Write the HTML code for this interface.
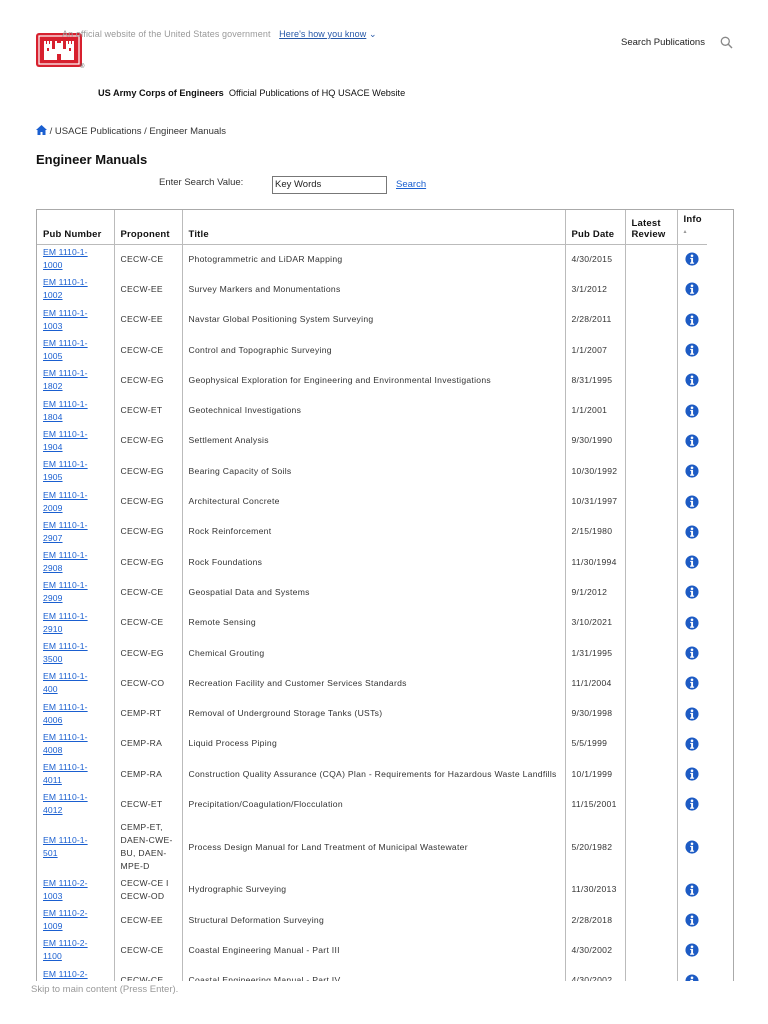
<!DOCTYPE html>
<html><head><meta charset="utf-8">
<style>
*{margin:0;padding:0;box-sizing:border-box}
body{width:768px;height:1024px;overflow:hidden;background:#fff;font-family:"Liberation Sans","DejaVu Sans",sans-serif;color:#222;position:relative}
.abs{position:absolute}
a{color:#1a5fd0;text-decoration:underline}
.gov{left:62px;top:29px;font-size:9px;color:#999;letter-spacing:.1px}
.gov a{color:#2557a7;margin-left:6px}
.title{left:98px;top:88px;font-size:9.2px;color:#111}
.crumb{left:36px;top:125px;font-size:9.5px;color:#333}
h1{position:absolute;left:36px;top:152px;font-size:13px;font-weight:bold;color:#111}
.wrap{position:absolute;left:36px;top:209px;width:698px;height:800px;border:1px solid #aaa;border-bottom:none;overflow:hidden}
table{border-collapse:collapse;width:670px;table-layout:fixed;font-size:8.6px;letter-spacing:.28px}
th{font-size:9.5px;font-weight:bold;text-align:left;vertical-align:bottom;padding:0 6px 4px 6px;border-left:1px solid #bbb;border-bottom:1px solid #bbb;height:34px;color:#111;letter-spacing:.2px}
th:first-child{border-left:none}
td{border-left:1px solid #bbb;padding:0 6px;vertical-align:middle;height:30.3px;line-height:13px;color:#333}
td:first-child{border-left:none;letter-spacing:.1px}
td:nth-child(3){white-space:nowrap;overflow:hidden}
.i{display:block;margin:0 auto}
</style></head><body>
<svg class="abs" style="left:36px;top:33px" width="46" height="34" viewBox="0 0 46 34">
<rect x="0" y="0" width="46" height="34" rx="3" fill="#d7202e"/>
<rect x="3" y="3" width="40" height="28" fill="none" stroke="#fff" stroke-width="1.2"/>
<g fill="#fff">
<rect x="8" y="11" width="8" height="16"/><rect x="30" y="11" width="8" height="16"/><rect x="16" y="16" width="14" height="11"/>
<rect x="8" y="8" width="2" height="3"/><rect x="11" y="8" width="2" height="3"/><rect x="14" y="8" width="2" height="3"/>
<rect x="30" y="8" width="2" height="3"/><rect x="33" y="8" width="2" height="3"/><rect x="36" y="8" width="2" height="3"/>
<rect x="19" y="10" width="8" height="6"/><rect x="19" y="8" width="2" height="2"/><rect x="25" y="8" width="2" height="2"/>
</g>
<g fill="#d7202e"><rect x="11" y="15" width="2" height="3"/><rect x="33" y="15" width="2" height="3"/><rect x="21" y="21" width="4" height="6"/></g>
</svg>
<div class="abs" style="left:80px;top:64px;font-size:6px;color:#555">®</div>
<div class="abs gov">An official website of the United States government <a>Here's how you know</a> <span style="color:#2557a7">⌄</span></div>
<div class="abs" style="left:621px;top:37px;font-size:9.5px;color:#222">Search Publications</div>
<svg class="abs" style="left:720px;top:36px" width="13" height="13" viewBox="0 0 13 13"><circle cx="5.3" cy="5.3" r="4" fill="none" stroke="#888" stroke-width="1.3"/><path d="M8.3 8.3L12 12" stroke="#888" stroke-width="1.4"/></svg>
<div class="abs title"><b>US Army Corps of Engineers</b>&nbsp; Official Publications of HQ USACE Website</div>
<div class="abs crumb"><svg width="11" height="10" viewBox="0 0 11 10" style="vertical-align:-1px"><path d="M5.5 0L0 5h1.5v5h3V7h2v3h3V5H11z" fill="#1a5fd0"/></svg> / USACE Publications / Engineer Manuals</div>
<h1>Engineer Manuals</h1>
<div class="abs" style="left:159px;top:177px;font-size:9.5px;color:#333">Enter Search Value:</div>
<div class="abs" style="left:272px;top:176px;width:115px;height:18px;border:1px solid #777;font-size:9.5px;padding:2px 2px;color:#222">Key Words</div>
<div class="abs" style="left:396px;top:179px;font-size:9.5px"><a>Search</a></div>
<div class="wrap"><table>
<colgroup><col style="width:77px"><col style="width:68px"><col style="width:383px"><col style="width:60px"><col style="width:52px"><col style="width:30px"></colgroup>
<tr><th>Pub Number</th><th>Proponent</th><th>Title</th><th>Pub Date</th><th>Latest Review</th><th style="vertical-align:top;padding-top:4px">Info<br><span style="font-size:6px;color:#999;font-weight:normal">▴</span></th></tr>
<tbody id="b">
<tr><td><a>EM 1110-1-<br>1000</a></td><td>CECW-CE</td><td>Photogrammetric and LiDAR Mapping</td><td>4/30/2015</td><td></td><td>I</td></tr>
<tr><td><a>EM 1110-1-<br>1002</a></td><td>CECW-EE</td><td>Survey Markers and Monumentations</td><td>3/1/2012</td><td></td><td>I</td></tr>
<tr><td><a>EM 1110-1-<br>1003</a></td><td>CECW-EE</td><td>Navstar Global Positioning System Surveying</td><td>2/28/2011</td><td></td><td>I</td></tr>
<tr><td><a>EM 1110-1-<br>1005</a></td><td>CECW-CE</td><td>Control and Topographic Surveying</td><td>1/1/2007</td><td></td><td>I</td></tr>
<tr><td><a>EM 1110-1-<br>1802</a></td><td>CECW-EG</td><td>Geophysical Exploration for Engineering and Environmental Investigations</td><td>8/31/1995</td><td></td><td>I</td></tr>
<tr><td><a>EM 1110-1-<br>1804</a></td><td>CECW-ET</td><td>Geotechnical Investigations</td><td>1/1/2001</td><td></td><td>I</td></tr>
<tr><td><a>EM 1110-1-<br>1904</a></td><td>CECW-EG</td><td>Settlement Analysis</td><td>9/30/1990</td><td></td><td>I</td></tr>
<tr><td><a>EM 1110-1-<br>1905</a></td><td>CECW-EG</td><td>Bearing Capacity of Soils</td><td>10/30/1992</td><td></td><td>I</td></tr>
<tr><td><a>EM 1110-1-<br>2009</a></td><td>CECW-EG</td><td>Architectural Concrete</td><td>10/31/1997</td><td></td><td>I</td></tr>
<tr><td><a>EM 1110-1-<br>2907</a></td><td>CECW-EG</td><td>Rock Reinforcement</td><td>2/15/1980</td><td></td><td>I</td></tr>
<tr><td><a>EM 1110-1-<br>2908</a></td><td>CECW-EG</td><td>Rock Foundations</td><td>11/30/1994</td><td></td><td>I</td></tr>
<tr><td><a>EM 1110-1-<br>2909</a></td><td>CECW-CE</td><td>Geospatial Data and Systems</td><td>9/1/2012</td><td></td><td>I</td></tr>
<tr><td><a>EM 1110-1-<br>2910</a></td><td>CECW-CE</td><td>Remote Sensing</td><td>3/10/2021</td><td></td><td>I</td></tr>
<tr><td><a>EM 1110-1-<br>3500</a></td><td>CECW-EG</td><td>Chemical Grouting</td><td>1/31/1995</td><td></td><td>I</td></tr>
<tr><td><a>EM 1110-1-<br>400</a></td><td>CECW-CO</td><td>Recreation Facility and Customer Services Standards</td><td>11/1/2004</td><td></td><td>I</td></tr>
<tr><td><a>EM 1110-1-<br>4006</a></td><td>CEMP-RT</td><td>Removal of Underground Storage Tanks (USTs)</td><td>9/30/1998</td><td></td><td>I</td></tr>
<tr><td><a>EM 1110-1-<br>4008</a></td><td>CEMP-RA</td><td>Liquid Process Piping</td><td>5/5/1999</td><td></td><td>I</td></tr>
<tr><td><a>EM 1110-1-<br>4011</a></td><td>CEMP-RA</td><td>Construction Quality Assurance (CQA) Plan - Requirements for Hazardous Waste Landfills</td><td>10/1/1999</td><td></td><td>I</td></tr>
<tr><td><a>EM 1110-1-<br>4012</a></td><td>CECW-ET</td><td>Precipitation/Coagulation/Flocculation</td><td>11/15/2001</td><td></td><td>I</td></tr>
<tr><td style="height:55px"><a>EM 1110-1-<br>501</a></td><td>CEMP-ET,<br>DAEN-CWE-<br>BU, DAEN-<br>MPE-D</td><td>Process Design Manual for Land Treatment of Municipal Wastewater</td><td>5/20/1982</td><td></td><td>I</td></tr>
<tr><td><a>EM 1110-2-<br>1003</a></td><td>CECW-CE I<br>CECW-OD</td><td>Hydrographic Surveying</td><td>11/30/2013</td><td></td><td>I</td></tr>
<tr><td><a>EM 1110-2-<br>1009</a></td><td>CECW-EE</td><td>Structural Deformation Surveying</td><td>2/28/2018</td><td></td><td>I</td></tr>
<tr><td><a>EM 1110-2-<br>1100</a></td><td>CECW-CE</td><td>Coastal Engineering Manual - Part III</td><td>4/30/2002</td><td></td><td>I</td></tr>
<tr><td><a>EM 1110-2-<br>1100</a></td><td>CECW-CE</td><td>Coastal Engineering Manual - Part IV</td><td>4/30/2002</td><td></td><td>I</td></tr>
</tbody></table></div>
<div class="abs" style="left:0;top:981px;width:768px;height:43px;background:#fff"></div>
<div class="abs" style="left:31px;top:984px;font-size:9.5px;color:#999">Skip to main content (Press Enter).</div>
<script>
document.querySelectorAll('#b tr td:last-child').forEach(function(td){
td.innerHTML='<svg class="i" width="14" height="14" viewBox="0 0 16 16"><circle cx="8" cy="8" r="7.5" fill="#1d5bc4"/><circle cx="8" cy="4.3" r="1.5" fill="#fff"/><path d="M6 6.7h3.2v5.3h1.2v1.4H5.8V12h1.2V8H6z" fill="#fff"/></svg>';
});
</script>
</body></html>
